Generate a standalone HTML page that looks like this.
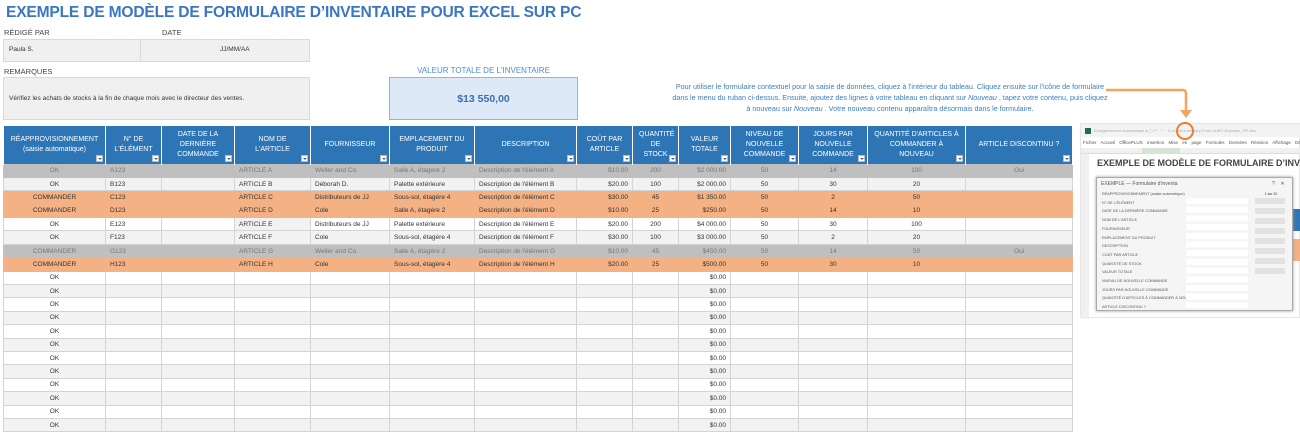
<!DOCTYPE html>
<html><head><meta charset="utf-8"><style>
*{margin:0;padding:0;box-sizing:border-box}
body{width:1300px;height:434px;background:#fff;position:relative;overflow:hidden;font-family:"Liberation Sans",sans-serif;color:#333}
.a{position:absolute}
.lbl{font-size:7.5px;color:#444}
table{position:absolute;left:3px;top:126px;width:1069px;border-collapse:collapse;table-layout:fixed;font-size:6.5px}
td,th{border:1px solid #d4d4d4;height:13.4px;white-space:nowrap;overflow:hidden;padding:0 4px}
th{background:#2e75b6;color:#fff;font-weight:normal;height:38px;border:1px solid #fff;border-width:0 1px;font-size:7px;line-height:10px;position:relative;white-space:normal;padding:0 6px}
th i{position:absolute;right:2px;bottom:2px;width:7px;height:7px;background:#fff;border:1px solid #bbb}
th i:after{content:"";position:absolute;left:1px;top:2px;border:2px solid transparent;border-top:2px solid #666}
.c{text-align:center}.r{text-align:right}
.g td{background:#bfbfbf;color:#777;border-color:#bfbfbf}
.l td{background:#f2f2f2}
.o td{background:#f4b183;border-color:#f4b183}
.w td{background:#fff}
.x{font-size:5px;color:#555}
</style></head><body>
<div class="a" style="left:6px;top:4px;font-size:15.6px;font-weight:bold;color:#3a76c4;letter-spacing:-0.2px;white-space:nowrap">EXEMPLE DE MODÈLE DE FORMULAIRE D’INVENTAIRE POUR EXCEL SUR PC</div>
<div class="a lbl" style="left:4px;top:28px">RÉDIGÉ PAR</div>
<div class="a lbl" style="left:162px;top:28px">DATE</div>
<div class="a" style="left:3px;top:39px;width:307px;height:23px;background:#f0f0f0;border:1px solid #d9d9d9"></div>
<div class="a" style="left:140px;top:39px;width:1px;height:23px;background:#d9d9d9"></div>
<div class="a" style="left:9px;top:46px;font-size:6.5px">Paula S.</div>
<div class="a" style="left:220px;top:46px;font-size:6.5px">JJ/MM/AA</div>
<div class="a lbl" style="left:4px;top:67px">REMARQUES</div>
<div class="a" style="left:3px;top:77px;width:307px;height:43px;background:#f0f0f0;border:1px solid #d9d9d9"></div>
<div class="a" style="left:9px;top:95px;font-size:6.5px">Vérifiez les achats de stocks à la fin de chaque mois avec le directeur des ventes.</div>
<div class="a" style="left:389px;top:66px;width:189px;text-align:center;font-size:8px;color:#4a8fd4">VALEUR TOTALE DE L'INVENTAIRE</div>
<div class="a" style="left:389px;top:77px;width:189px;height:43px;background:#dde9f6;border:1px solid #8eb4e3;text-align:center;line-height:43px;font-size:10.5px;font-weight:bold;color:#3a6fb0">$13 550,00</div>
<div class="a" style="left:670px;top:81px;width:440px;text-align:center;font-size:7.2px;line-height:11px;color:#3a7fc1">Pour utiliser le formulaire contextuel pour la saisie de données, cliquez à l'intérieur du tableau. Cliquez ensuite sur l'icône de formulaire dans le menu du ruban ci-dessus.  Ensuite, ajoutez des lignes à votre tableau en cliquant sur <i>Nouveau</i> , tapez votre contenu, puis cliquez à nouveau sur <i>Nouveau</i> . Votre nouveau contenu apparaîtra désormais dans le formulaire.</div>
<!-- excel panel -->
<div class="a" style="left:1080px;top:123px;width:220px;height:195px;background:#fff;border:1px solid #e6e6e6">
 <div class="a" style="left:0;top:0;width:220px;height:13px;background:#f3f3f3"></div>
 <div class="a" style="left:4px;top:4px;width:6px;height:6px;background:#1e7145"></div>
 <div class="a x" style="left:13px;top:4px;color:#aaa;font-size:4px;white-space:nowrap">Enregistrement automatique ●  ▢ ↶ · ♡ ·        IC-Excel-Inventory-Form-11807-Example_FR.xlsx</div>
 <div class="a x" style="left:2px;top:16px;font-size:4.5px;word-spacing:3px;white-space:nowrap">Fichier Accueil OfficePLUS Insertion Mise en page Formules Données Révision Affichage Dével</div>
 <div class="a" style="left:0;top:24px;width:220px;height:6px;background:#f0f0f0;border-bottom:1px solid #ddd"></div>
 <div class="a" style="left:61px;top:24px;width:38px;height:6px;background:#d6e4d8"></div>
 <div class="a" style="left:0;top:30px;width:8px;height:165px;background:#f0f0f0"></div>
 <div class="a" style="left:16px;top:34px;font-size:9px;font-weight:bold;color:#444;white-space:nowrap">EXEMPLE DE MODÈLE DE FORMULAIRE D’INVENT</div>
 <div class="a" style="left:208px;top:85px;width:12px;height:22px;background:#2e75b6"></div>
 <div class="a" style="left:208px;top:115px;width:12px;height:22px;background:#f4b183"></div>
 <div class="a" style="left:15px;top:53px;width:197px;height:134px;background:#f5f5f5;border:1px solid #aaa;box-shadow:0 0 3px #999">
  <div class="a x" style="left:4px;top:3px">EXEMPLE — Formulaire d'inventa</div>
  <div class="a x" style="left:175px;top:3px">?&nbsp;&nbsp;&nbsp;&nbsp;✕</div>
  <div class="a" style="left:5px;top:12px;width:160px;font-size:3.8px;color:#555;line-height:8.7px">RÉAPPROVISIONNEMENT (saisie automatique)<br>N° DE L'ÉLÉMENT<br>DATE DE LA DERNIÈRE COMMANDE<br>NOM DE L'ARTICLE<br>FOURNISSEUR<br>EMPLACEMENT DU PRODUIT<br>DESCRIPTION<br>COÛT PAR ARTICLE<br>QUANTITÉ DE STOCK<br>VALEUR TOTALE<br>NIVEAU DE NOUVELLE COMMANDE<br>JOURS PAR NOUVELLE COMMANDE<br>QUANTITÉ D'ARTICLES À COMMANDER À NOUVEAU<br>ARTICLE DISCONTINU ?</div>
  <div class="a" style="left:89px;top:20px;width:62px;height:110px;background:repeating-linear-gradient(#fff 0 6px,transparent 6px 8.7px)"></div>
  <div class="a" style="left:162px;top:14px;width:24px;font-size:3.5px;text-align:center">1 sur 20</div>
  <div class="a" style="left:158px;top:20px;width:30px;height:80px;background:repeating-linear-gradient(#e2e2e2 0 6px,transparent 6px 10px)"></div>
 </div>
</div>
<svg class="a" style="left:1080px;top:84px" width="120" height="60"><path d="M26 6 H103 Q106 6 106 10 V28" stroke="#f4a460" stroke-width="2.5" fill="none"/><path d="M100 26 L112 26 L106 34 Z" fill="#f4a460"/><circle cx="105" cy="47" r="8" stroke="#ed7d31" stroke-width="2" fill="none"/></svg>
<table>
<colgroup><col style="width:102px"><col style="width:56px"><col style="width:73px"><col style="width:76px"><col style="width:79px"><col style="width:85px"><col style="width:102px"><col style="width:56px"><col style="width:46px"><col style="width:52px"><col style="width:68px"><col style="width:69px"><col style="width:98px"><col style="width:107px"></colgroup>
<tr><th>RÉAPPROVISIONNEMENT (saisie automatique)<i></i></th><th>N° DE L'ÉLÉMENT<i></i></th><th>DATE DE LA DERNIÈRE COMMANDE<i></i></th><th>NOM DE L'ARTICLE<i></i></th><th>FOURNISSEUR<i></i></th><th>EMPLACEMENT DU PRODUIT<i></i></th><th>DESCRIPTION<i></i></th><th>COÛT PAR ARTICLE<i></i></th><th>QUANTITÉ DE STOCK<i></i></th><th>VALEUR TOTALE<i></i></th><th>NIVEAU DE NOUVELLE COMMANDE<i></i></th><th>JOURS PAR NOUVELLE COMMANDE<i></i></th><th>QUANTITÉ D'ARTICLES À COMMANDER À NOUVEAU<i></i></th><th>ARTICLE DISCONTINU ?<i></i></th></tr>
<tr class="g"><td class="c">OK</td><td>A123</td><td></td><td>ARTICLE A</td><td>Weller and Co.</td><td>Salle A, étagère 2</td><td>Description de l'élément A</td><td class="r">$10.00</td><td class="c">200</td><td class="r">$2 000.00</td><td class="c">50</td><td class="c">14</td><td class="c">100</td><td class="c">Oui</td></tr>
<tr class="l"><td class="c">OK</td><td>B123</td><td></td><td>ARTICLE B</td><td>Déborah D.</td><td>Palette extérieure</td><td>Description de l'élément B</td><td class="r">$20.00</td><td class="c">100</td><td class="r">$2 000.00</td><td class="c">50</td><td class="c">30</td><td class="c">20</td><td></td></tr>
<tr class="o"><td class="c">COMMANDER</td><td>C123</td><td></td><td>ARTICLE C</td><td>Distributeurs de JJ</td><td>Sous-sol, étagère 4</td><td>Description de l'élément C</td><td class="r">$30.00</td><td class="c">45</td><td class="r">$1 350.00</td><td class="c">50</td><td class="c">2</td><td class="c">50</td><td></td></tr>
<tr class="o"><td class="c">COMMANDER</td><td>D123</td><td></td><td>ARTICLE D</td><td>Cole</td><td>Salle A, étagère 2</td><td>Description de l'élément D</td><td class="r">$10.00</td><td class="c">25</td><td class="r">$250.00</td><td class="c">50</td><td class="c">14</td><td class="c">10</td><td></td></tr>
<tr class="w"><td class="c">OK</td><td>E123</td><td></td><td style="background:#f2f2f2">ARTICLE E</td><td>Distributeurs de JJ</td><td>Palette extérieure</td><td>Description de l'élément E</td><td class="r">$20.00</td><td class="c">200</td><td class="r">$4 000.00</td><td class="c">50</td><td class="c">30</td><td class="c">100</td><td></td></tr>
<tr class="l"><td class="c">OK</td><td>F123</td><td></td><td>ARTICLE F</td><td>Cole</td><td>Sous-sol, étagère 4</td><td>Description de l'élément F</td><td class="r">$30.00</td><td class="c">100</td><td class="r">$3 000.00</td><td class="c">50</td><td class="c">2</td><td class="c">20</td><td></td></tr>
<tr class="g"><td class="c">COMMANDER</td><td>G123</td><td></td><td>ARTICLE G</td><td>Weller and Co.</td><td>Salle A, étagère 2</td><td>Description de l'élément G</td><td class="r">$10.00</td><td class="c">45</td><td class="r">$450.00</td><td class="c">50</td><td class="c">14</td><td class="c">50</td><td class="c">Oui</td></tr>
<tr class="o"><td class="c">COMMANDER</td><td>H123</td><td></td><td>ARTICLE H</td><td>Cole</td><td>Sous-sol, étagère 4</td><td>Description de l'élément H</td><td class="r">$20.00</td><td class="c">25</td><td class="r">$500.00</td><td class="c">50</td><td class="c">30</td><td class="c">10</td><td></td></tr>
<tr class="w"><td class="c">OK</td><td></td><td></td><td></td><td></td><td></td><td></td><td></td><td></td><td class="r">$0.00</td><td></td><td></td><td></td><td></td></tr>
<tr class="l"><td class="c">OK</td><td></td><td></td><td></td><td></td><td></td><td></td><td></td><td></td><td class="r">$0.00</td><td></td><td></td><td></td><td></td></tr>
<tr class="w"><td class="c">OK</td><td></td><td></td><td></td><td></td><td></td><td></td><td></td><td></td><td class="r">$0.00</td><td></td><td></td><td></td><td></td></tr>
<tr class="l"><td class="c">OK</td><td></td><td></td><td></td><td></td><td></td><td></td><td></td><td></td><td class="r">$0.00</td><td></td><td></td><td></td><td></td></tr>
<tr class="w"><td class="c">OK</td><td></td><td></td><td></td><td></td><td></td><td></td><td></td><td></td><td class="r">$0.00</td><td></td><td></td><td></td><td></td></tr>
<tr class="l"><td class="c">OK</td><td></td><td></td><td></td><td></td><td></td><td></td><td></td><td></td><td class="r">$0.00</td><td></td><td></td><td></td><td></td></tr>
<tr class="w"><td class="c">OK</td><td></td><td></td><td></td><td></td><td></td><td></td><td></td><td></td><td class="r">$0.00</td><td></td><td></td><td></td><td></td></tr>
<tr class="l"><td class="c">OK</td><td></td><td></td><td></td><td></td><td></td><td></td><td></td><td></td><td class="r">$0.00</td><td></td><td></td><td></td><td></td></tr>
<tr class="w"><td class="c">OK</td><td></td><td></td><td></td><td></td><td></td><td></td><td></td><td></td><td class="r">$0.00</td><td></td><td></td><td></td><td></td></tr>
<tr class="l"><td class="c">OK</td><td></td><td></td><td></td><td></td><td></td><td></td><td></td><td></td><td class="r">$0.00</td><td></td><td></td><td></td><td></td></tr>
<tr class="w"><td class="c">OK</td><td></td><td></td><td></td><td></td><td></td><td></td><td></td><td></td><td class="r">$0.00</td><td></td><td></td><td></td><td></td></tr>
<tr class="l"><td class="c">OK</td><td></td><td></td><td></td><td></td><td></td><td></td><td></td><td></td><td class="r">$0.00</td><td></td><td></td><td></td><td></td></tr>
</table>
</body></html>
